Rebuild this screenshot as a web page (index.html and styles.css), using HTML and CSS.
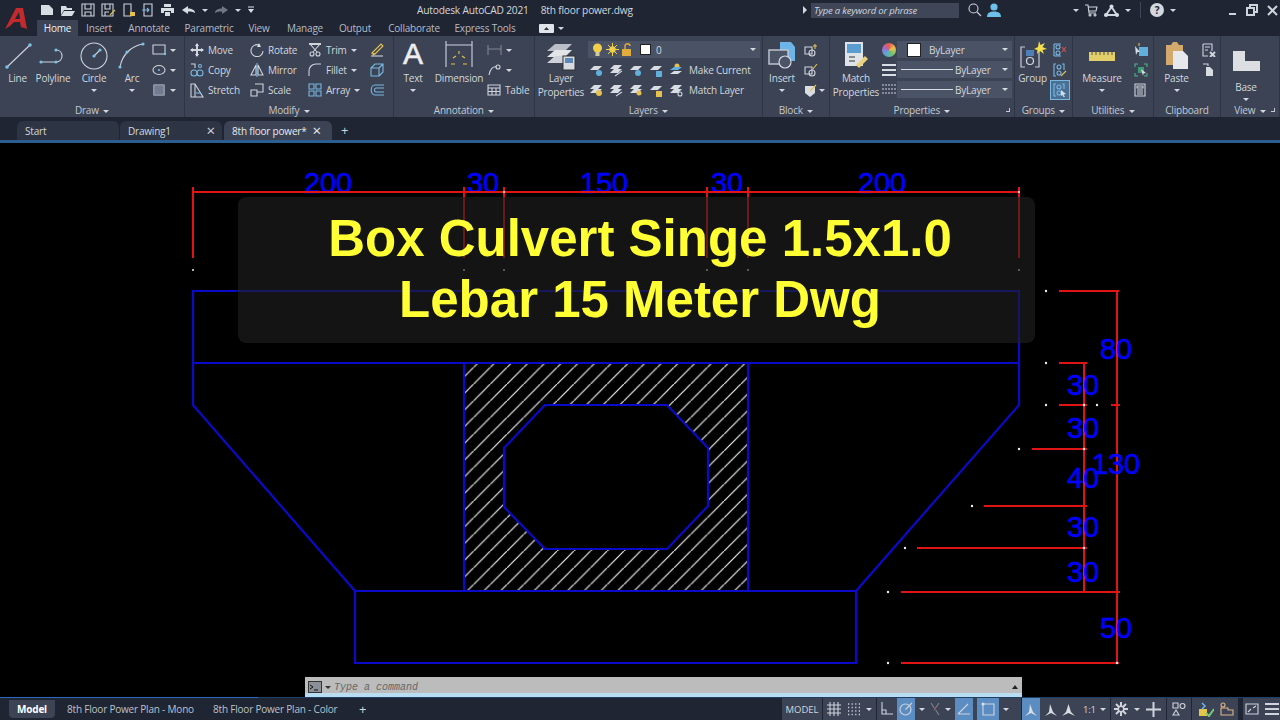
FILE: index.html
```html
<!DOCTYPE html>
<html lang="en">
<head>
    <meta charset="UTF-8">
    <title>Autodesk AutoCAD 2021 - 8th floor power.dwg</title>
    <link rel="stylesheet" href="styles.css">
</head>
<body>
<div class="app">
    <!-- Title bar and ribbon tabs -->
    <header class="topbar">
        <div class="logo">
            <svg width="24" height="28" viewBox="0 0 24 28"><path class="logo-a" d="M1 24 L12 3 H19 L23 24 L17 22 L16 17 H10 L6 21 Z M11 14 H16 L15 7 Z"/></svg>
        </div>
        <div class="topbar-rows">
            <div class="titlerow">
                <div class="quick">
                    <svg class="ic" width="14" height="14" viewBox="0 0 14 14"><path class="solid" d="M1 2 H9 L13 6 V12 H1 Z"/></svg>
                    <svg class="ic" width="15" height="14" viewBox="0 0 15 14"><path class="solid" d="M1 3 H6 L7 5 H12 V7 H4 L1 12 Z M4 8 H15 L12 13 H1 Z"/></svg>
                    <svg class="ic" width="14" height="14" viewBox="0 0 14 14"><path d="M1 1 H13 V13 H1 Z M4 1 V6 H10 V1 M4 13 V9 H10 V13"/></svg>
                    <svg class="ic" width="15" height="14" viewBox="0 0 15 14"><path d="M1 1 H12 V13 H1 Z M4 1 V6 H9 V1 M4 13 V9 H8"/><path class="yel" d="M9 12 L14 7"/></svg>
                    <svg class="ic" width="14" height="14" viewBox="0 0 14 14"><path d="M2 1 H9 V13 H2 Z"/><path class="solid-y" d="M8 9 H13 V13 H8 Z"/></svg>
                    <svg class="ic" width="12" height="14" viewBox="0 0 12 14"><path d="M2 1 H10 V13 H2 Z"/><path class="bl" d="M0 7 H7 M5 5 L7 7 L5 9"/></svg>
                    <svg class="ic" width="15" height="14" viewBox="0 0 15 14"><path class="solid" d="M4 1 H11 V4 H4 Z M1 5 H14 V10 H11 V8 H4 V10 H1 Z M5 9 H10 V13 H5 Z"/></svg>
                    <svg class="ic" width="15" height="14" viewBox="0 0 15 14"><path class="solid" d="M1 7 L7 3 V5.5 C11 5.5 14 7 14 10 C12 8.5 10 8.5 7 8.5 V11 Z"/></svg>
                    <span class="caret"></span>
                    <svg class="ic dim" width="15" height="14" viewBox="0 0 15 14"><path class="solid" d="M14 7 L8 3 V5.5 C4 5.5 1 7 1 10 C3 8.5 5 8.5 8 8.5 V11 Z"/></svg>
                    <span class="caret"></span>
                    <svg class="ic" width="8" height="8" viewBox="0 0 8 8"><path d="M1 1 H7"/><path class="solid" d="M1 3 H7 L4 7 Z"/></svg>
                </div>
                <div class="doc-title"><span>Autodesk AutoCAD 2021</span><span>8th floor power.dwg</span></div>
                <div class="searchgroup">
                    <span class="arrow-right"></span>
                    <div class="searchbox">Type a keyword or phrase</div>
                    <svg class="ic" width="14" height="14" viewBox="0 0 14 14"><circle cx="5.5" cy="5.5" r="4.5"/><path d="M9 9 L13 13"/></svg>
                    <svg width="16" height="15" viewBox="0 0 16 15"><circle cx="8" cy="4" r="3.6" fill="#6cc0ea"/><path d="M1 14 C1 9 5 8.5 8 8.5 C11 8.5 15 9 15 14 Z" fill="#6cc0ea"/></svg>
                </div>
                <div class="helpgroup">
                    <span class="caret"></span>
                    <svg class="ic" width="13" height="13" viewBox="0 0 13 13"><path d="M0 1 H3 L4 9 H11 M3.5 3 H12 L11 7 H4"/><circle cx="5" cy="11" r="1"/><circle cx="10" cy="11" r="1"/></svg>
                    <svg class="ic" width="15" height="13" viewBox="0 0 15 13"><path class="thick" d="M7.5 3 L2 11 H13 Z"/><circle class="solid" cx="7.5" cy="2.5" r="2"/><circle class="solid" cx="2" cy="11" r="2"/><circle class="solid" cx="13" cy="11" r="2"/></svg>
                    <span class="caret"></span>
                    <span class="vsep"></span>
                    <span class="help">?</span>
                    <span class="caret"></span>
                </div>
                <div class="winbtns">
                    <svg class="ic" width="9" height="10" viewBox="0 0 9 10"><path class="thick" d="M1 9 H8"/></svg>
                    <svg class="ic" width="12" height="12" viewBox="0 0 12 12"><path class="thick" d="M1 4 H8 V11 H1 Z M4 4 V1 H11 V8 H8"/></svg>
                    <svg class="ic" width="11" height="11" viewBox="0 0 11 11"><path class="thick" d="M1 1 L10 10 M10 1 L1 10"/></svg>
                </div>
            </div>
            <nav class="ribbon-tabs">
                <span class="rtab active">Home</span>
                <span class="rtab">Insert</span>
                <span class="rtab">Annotate</span>
                <span class="rtab">Parametric</span>
                <span class="rtab">View</span>
                <span class="rtab">Manage</span>
                <span class="rtab">Output</span>
                <span class="rtab">Collaborate</span>
                <span class="rtab">Express Tools</span>
                <span class="rtab-extra"><svg width="15" height="9" viewBox="0 0 15 9"><rect width="15" height="9" rx="1" fill="#dfe3ea"/><path d="M5 6 L7.5 3 L10 6 Z" fill="#333"/></svg><span class="caret"></span></span>
            </nav>
        </div>
    </header>

    <!-- Ribbon panels -->
    <section class="ribbon">
        <div class="panel p-draw">
            <div class="panel-body">
                <div class="tool"><div class="tool-ic"><svg class="ic" width="30" height="30" viewBox="0 0 30 30"><path d="M4 26 L27 4"/><circle class="node" cx="4" cy="26" r="1.8"/><circle class="node" cx="27" cy="4" r="1.8"/></svg></div><span>Line</span></div>
                <div class="tool"><div class="tool-ic"><svg class="ic" width="30" height="30" viewBox="0 0 30 30"><path d="M3 21 H18 C26 21 26 9 18 9"/><circle class="node" cx="3" cy="21" r="1.6"/><circle class="node" cx="18" cy="21" r="1.6"/><circle class="node" cx="18" cy="9" r="1.6"/></svg></div><span>Polyline</span></div>
                <div class="tool"><div class="tool-ic"><svg class="ic" width="30" height="30" viewBox="0 0 30 30"><circle cx="15" cy="15" r="13"/><path d="M15 15 L21 9"/><circle class="node" cx="15" cy="15" r="1.6"/><circle class="node" cx="21" cy="9" r="1.6"/></svg></div><span>Circle</span><span class="caret"></span></div>
                <div class="tool"><div class="tool-ic"><svg class="ic" width="30" height="30" viewBox="0 0 30 30"><path d="M3 26 C5 14 14 5 26 3"/><circle class="node" cx="3" cy="26" r="1.6"/><circle class="node" cx="10" cy="11" r="1.6"/><circle class="node" cx="26" cy="3" r="1.6"/></svg></div><span>Arc</span><span class="caret"></span></div>
                <div class="stack">
                    <div class="row"><svg class="ic" width="14" height="12" viewBox="0 0 14 12"><path d="M1 1 H13 V10 H1 Z"/><circle class="node" cx="13" cy="10" r="1.2"/></svg><span class="caret"></span></div>
                    <div class="row"><svg class="ic" width="14" height="12" viewBox="0 0 14 12"><ellipse cx="7" cy="6" rx="6" ry="4.5"/><circle class="node" cx="7" cy="6" r="1"/></svg><span class="caret"></span></div>
                    <div class="row"><svg class="ic" width="14" height="14" viewBox="0 0 14 14"><path d="M2 2 H12 V12 H2 Z"/><path class="hatch-fill" d="M2 2 H12 V12 H2 Z"/></svg><span class="caret"></span></div>
                </div>
            </div>
            <div class="panel-title">Draw <span class="caret"></span></div>
        </div>

        <div class="panel p-modify">
            <div class="panel-body">
                <div class="stack">
                    <div class="row"><svg class="ic" width="14" height="14" viewBox="0 0 14 14"><path class="thick" d="M7 1 V13 M1 7 H13"/><path class="solid" d="M7 0 L9 3 H5 Z M7 14 L9 11 H5 Z M0 7 L3 5 V9 Z M14 7 L11 5 V9 Z"/></svg><span>Move</span></div>
                    <div class="row"><svg class="ic" width="14" height="14" viewBox="0 0 14 14"><circle class="bl" cx="4" cy="10" r="3"/><circle class="bl" cx="10" cy="10" r="3"/><path d="M1 1 H5 V5"/><circle class="bl" cx="10" cy="3" r="1.5"/></svg><span>Copy</span></div>
                    <div class="row"><svg class="ic" width="14" height="15" viewBox="0 0 14 15"><path d="M1 1 H5 V14 H1 Z M5 1 L13 14 H5"/><path class="bl" d="M6 10 H11"/></svg><span>Stretch</span></div>
                </div>
                <div class="stack">
                    <div class="row"><svg class="ic" width="14" height="14" viewBox="0 0 14 14"><path d="M9 2 A6 6 0 1 0 13 8"/><path class="solid" d="M9 0 L11 4 L7 4 Z"/></svg><span>Rotate</span></div>
                    <div class="row"><svg class="ic" width="14" height="14" viewBox="0 0 14 14"><path d="M6 2 L1 12 H6 Z M8 2 L13 12 H8 Z"/><path class="bl" d="M7 0 V14"/></svg><span>Mirror</span></div>
                    <div class="row"><svg class="ic" width="14" height="14" viewBox="0 0 14 14"><path d="M1 13 V7 H7 V13 Z M5 1 H13 V9 H7"/></svg><span>Scale</span></div>
                </div>
                <div class="stack">
                    <div class="row"><svg class="ic" width="14" height="14" viewBox="0 0 14 14"><path d="M2 1 L9 9 M12 1 L5 9"/><circle cx="4" cy="11" r="2"/><circle cx="10" cy="11" r="2"/><path class="thick" d="M1 1 H13"/></svg><span>Trim</span><span class="caret"></span></div>
                    <div class="row"><svg class="ic" width="14" height="14" viewBox="0 0 14 14"><path d="M1 13 V8 C1 4 4 1 8 1 H13"/></svg><span>Fillet</span><span class="caret"></span></div>
                    <div class="row"><svg class="ic" width="14" height="14" viewBox="0 0 14 14"><path class="bl" d="M1 1 H6 V6 H1 Z M8 1 H13 V6 H8 Z M1 8 H6 V13 H1 Z M8 8 H13 V13 H8 Z"/></svg><span>Array</span><span class="caret"></span></div>
                </div>
                <div class="stack">
                    <div class="row"><svg class="ic" width="14" height="14" viewBox="0 0 14 14"><path class="yel" d="M2 10 L11 1 L13 3 L5 11 Z"/><path class="solid-y" d="M2 10 L5 11 L3 13 Z"/><path d="M1 13 H13"/></svg></div>
                    <div class="row"><svg class="ic" width="14" height="14" viewBox="0 0 14 14"><path class="bl" d="M1 5 H9 V13 H1 Z M1 5 L5 1 H13 V9 L9 13 M9 5 L13 1"/></svg></div>
                    <div class="row"><svg class="ic" width="14" height="12" viewBox="0 0 14 12"><path class="bl" d="M14 1 H5 C0 1 0 11 5 11 H14 M14 4 H6 C4 4 4 8 6 8 H14"/></svg></div>
                </div>
            </div>
            <div class="panel-title">Modify <span class="caret"></span></div>
        </div>

        <div class="panel p-annot">
            <div class="panel-body">
                <div class="tool"><div class="tool-ic"><span class="big-a">A</span></div><span>Text</span><span class="caret"></span></div>
                <div class="tool"><div class="tool-ic"><svg class="ic" width="28" height="28" viewBox="0 0 28 28"><path d="M1 1 V27 M27 1 V27 M1 5 H27"/><path class="yel" d="M8 18 L11 16 M14 11 V14 M20 18 L17 16 M6 24 H10 M18 24 H22"/></svg></div><span>Dimension</span></div>
                <div class="stack">
                    <div class="row"><svg class="ic dim" width="15" height="12" viewBox="0 0 15 12"><path d="M1 1 V11 M14 1 V11 M1 5 H14"/></svg><span class="caret"></span></div>
                    <div class="row"><svg class="ic" width="15" height="12" viewBox="0 0 15 12"><path d="M2 11 C3 5 6 2 10 3"/><circle cx="11" cy="3" r="2"/></svg><span class="caret"></span></div>
                    <div class="row"><svg class="ic" width="14" height="12" viewBox="0 0 14 12"><path d="M1 1 H13 V11 H1 Z M1 4 H13 M1 7.5 H13 M5 4 V11 M9 4 V11"/></svg><span>Table</span></div>
                </div>
            </div>
            <div class="panel-title">Annotation <span class="caret"></span></div>
        </div>

        <div class="panel p-layers">
            <div class="panel-body">
                <div class="tool"><div class="tool-ic"><svg width="30" height="30" viewBox="0 0 30 30"><path d="M1 10 L9 3 H26 L19 10 Z" fill="#b9bec8"/><path d="M1 16 L9 9 H26 L19 16 Z" fill="#e2e4e8"/><path d="M1 22 L9 15 H26 L19 22 Z" fill="#cfd2d8"/><rect x="17" y="15" width="12" height="14" fill="#d8dbe0" stroke="#333"/><rect x="19" y="17" width="8" height="5" fill="#5a88b8"/></svg></div><span>Layer</span><span>Properties</span></div>
                <div class="layer-col">
                    <div class="combo layer-combo">
                        <svg width="13" height="14" viewBox="0 0 13 14"><circle cx="6.5" cy="5" r="4.5" fill="#f2cf4a"/><rect x="4.5" y="9" width="4" height="4" fill="#d0c9a5"/></svg>
                        <svg width="13" height="13" viewBox="0 0 13 13"><circle cx="6.5" cy="6.5" r="3.2" fill="#f2cf4a"/><path d="M6.5 0 V13 M0 6.5 H13 M2 2 L11 11 M11 2 L2 11" stroke="#f2cf4a"/></svg>
                        <svg width="13" height="13" viewBox="0 0 13 13"><rect x="1" y="6" width="9" height="7" fill="#e2ab3e"/><path d="M4 6 V3 C4 0 9 0 9 3" stroke="#e2ab3e" stroke-width="1.4" fill="none"/></svg>
                        <span class="swatch"></span>
                        <span class="combo-text">0</span>
                        <span class="caret end"></span>
                    </div>
                    <div class="row layer-row">
                        <svg class="ic" width="14" height="13" viewBox="0 0 14 13"><path class="solid" d="M1 6 L5 2 H13 L9 6 Z"/><circle class="solid-b" cx="10" cy="9" r="3"/></svg>
                        <svg class="ic" width="14" height="13" viewBox="0 0 14 13"><path class="solid" d="M1 5 L5 1 H13 L9 5 Z M1 9 L5 5 H13 L9 9 Z"/><path d="M6 12 L13 7"/></svg>
                        <svg class="ic" width="14" height="13" viewBox="0 0 14 13"><path class="solid" d="M1 6 L5 2 H13 L9 6 Z"/><circle class="solid-b" cx="9" cy="9" r="3"/></svg>
                        <svg class="ic" width="14" height="13" viewBox="0 0 14 13"><path class="solid" d="M1 6 L5 2 H13 L9 6 Z"/><rect class="solid-b" x="7" y="7" width="6" height="6"/></svg>
                        <svg class="ic" width="14" height="14" viewBox="0 0 14 14"><circle class="solid-y" cx="8" cy="3" r="2.5"/><path class="solid-b" d="M1 7 L5 4 H13 L9 7 Z"/><path class="solid" d="M1 11 L5 8 H13 L9 11 Z"/></svg>
                        <span>Make Current</span>
                    </div>
                    <div class="row layer-row">
                        <svg class="ic" width="14" height="13" viewBox="0 0 14 13"><path class="solid" d="M1 5 L5 1 H13 L9 5 Z M1 9 L5 5 H13 L9 9 Z"/><circle class="solid-y" cx="10" cy="9" r="3"/></svg>
                        <svg class="ic" width="14" height="13" viewBox="0 0 14 13"><path class="solid" d="M1 5 L5 1 H13 L9 5 Z M1 9 L5 5 H13 L9 9 Z"/><path d="M7 12 L13 8"/></svg>
                        <svg class="ic" width="14" height="13" viewBox="0 0 14 13"><path class="solid" d="M1 5 L5 1 H13 L9 5 Z M1 9 L5 5 H13 L9 9 Z"/><circle class="solid-y" cx="10" cy="9" r="2.5"/></svg>
                        <svg class="ic" width="14" height="13" viewBox="0 0 14 13"><path class="solid" d="M1 6 L5 2 H13 L9 6 Z"/><rect class="solid-y" x="7" y="7" width="6" height="6"/></svg>
                        <svg class="ic" width="14" height="13" viewBox="0 0 14 13"><path class="solid" d="M1 5 L5 1 H13 L9 5 Z M1 9 L5 5 H13 L9 9 Z"/><circle cx="11" cy="10" r="2"/></svg>
                        <span>Match Layer</span>
                    </div>
                </div>
            </div>
            <div class="panel-title">Layers <span class="caret"></span></div>
        </div>

        <div class="panel p-block">
            <div class="panel-body">
                <div class="tool"><div class="tool-ic"><svg width="28" height="30" viewBox="0 0 28 30"><path d="M12 1 H23 L27 6 V20 H12 Z" fill="#6db4e8"/><rect x="1" y="9" width="19" height="14" fill="#4c5568" stroke="#c5cad3" stroke-width="1.4"/><circle cx="17" cy="21" r="6" fill="#4c5568" stroke="#d5d9e0" stroke-width="1.2"/></svg></div><span>Insert</span><span class="caret"></span></div>
                <div class="stack">
                    <div class="row"><svg class="ic" width="14" height="13" viewBox="0 0 14 13"><path d="M1 3 H8 V10 H1 Z"/><circle cx="8" cy="9" r="3"/><path class="yel" d="M11 0 V5 M9 2 H13"/></svg></div>
                    <div class="row"><svg class="ic" width="14" height="13" viewBox="0 0 14 13"><path d="M1 3 H8 V10 H1 Z"/><circle cx="8" cy="9" r="3"/><path class="yel" d="M9 5 L13 0"/></svg></div>
                    <div class="row"><svg class="ic" width="14" height="13" viewBox="0 0 14 13"><path class="solid" d="M1 2 H11 V9 L6 13 L1 9 Z"/><path class="yel" d="M6 7 L12 1"/></svg><span class="caret tight"></span></div>
                </div>
            </div>
            <div class="panel-title">Block <span class="caret"></span></div>
        </div>

        <div class="panel p-props">
            <div class="panel-body">
                <div class="tool"><div class="tool-ic"><svg width="26" height="30" viewBox="0 0 26 30"><rect x="2" y="1" width="18" height="24" fill="#dfe2e7"/><rect x="4" y="3" width="14" height="9" fill="#5a9bd0"/><path d="M6 16 H12 M6 20 H12" stroke="#333"/><path d="M13 24 L22 15 L25 18 L16 27 Z" fill="#e9d27a"/></svg></div><span>Match</span><span>Properties</span></div>
                <div class="stack prop-ics">
                    <div class="row"><span class="wheel"></span></div>
                    <div class="row"><svg class="ic" width="14" height="12" viewBox="0 0 14 12"><path class="solid" d="M0 0 H14 V2 H0 Z M0 5 H14 V7 H0 Z M0 10 H14 V12 H0 Z"/></svg></div>
                    <div class="row"><svg class="ic" width="14" height="12" viewBox="0 0 14 12"><path class="dash" d="M0 1 H14 M0 5 H14 M0 9 H14"/></svg></div>
                </div>
                <div class="prop-combos">
                    <div class="combo"><span class="swatch big"></span><span class="combo-text bylayer">ByLayer</span><span class="caret end"></span></div>
                    <div class="combo"><span class="lineprev"></span><span class="combo-text">ByLayer</span><span class="caret end"></span></div>
                    <div class="combo"><span class="lineprev"></span><span class="combo-text">ByLayer</span><span class="caret end"></span></div>
                </div>
            </div>
            <div class="panel-title">Properties <span class="caret"></span><span class="launcher"></span></div>
        </div>

        <div class="panel p-groups">
            <div class="panel-body">
                <div class="tool"><div class="tool-ic"><svg width="28" height="30" viewBox="0 0 28 30"><path d="M6 6 H2 V26 H6 M20 6 V26 H16" fill="none" stroke="#c8ccd4" stroke-width="1.2"/><rect x="7" y="9" width="8" height="6" fill="#4e80b8"/><circle cx="11" cy="20" r="3.5" fill="none" stroke="#d5d9e0" stroke-width="1.2"/><path d="M20 0 L21.5 4 L26 2 L23.5 6 L28 8 L23.5 9 L25 13 L21 10 L18 13 L18.5 9 L15 8 L19 6 Z" fill="#f4e04a"/></svg></div><span>Group</span></div>
                <div class="stack">
                    <div class="row"><svg class="ic" width="14" height="14" viewBox="0 0 14 14"><path class="bl" d="M1 1 H8 M1 13 H8 M1 1 V13"/><circle class="bl" cx="5" cy="4" r="2"/><circle class="bl" cx="5" cy="10" r="2"/><path class="red" d="M9 4 L13 9 M13 4 L9 9"/></svg></div>
                    <div class="row"><svg class="ic" width="14" height="14" viewBox="0 0 14 14"><path class="bl" d="M3 1 H1 V13 H3 M9 1 H11 V7"/><circle class="bl" cx="6" cy="4" r="2"/><circle class="bl" cx="6" cy="10" r="2"/><path class="yel" d="M8 13 L13 8"/></svg></div>
                    <div class="row picked"><svg class="ic" width="14" height="14" viewBox="0 0 14 14"><path class="bl" d="M3 1 H1 V13 H3 M9 1 H11 V6"/><circle class="bl" cx="6" cy="4" r="2"/><circle class="bl" cx="6" cy="10" r="2"/><path class="solid" d="M8 7 L13 11 L10.5 11.5 L12 14 L10.5 14 L9.5 12 L8 13 Z"/></svg></div>
                </div>
            </div>
            <div class="panel-title">Groups <span class="caret"></span></div>
        </div>

        <div class="panel p-utils">
            <div class="panel-body">
                <div class="tool"><div class="tool-ic"><svg width="26" height="10" viewBox="0 0 26 10"><rect width="26" height="9" y="1" fill="#e2cf6a"/><path d="M3 1 V4 M7 1 V4 M11 1 V4 M15 1 V4 M19 1 V4 M23 1 V4" stroke="#555"/></svg></div><span>Measure</span><span class="caret"></span></div>
                <div class="stack">
                    <div class="row"><svg class="ic" width="14" height="14" viewBox="0 0 14 14"><rect class="solid-b" x="5" y="4" width="9" height="9"/><path class="solid" d="M1 3 L6 9 L3.5 9 L2 12 Z"/><path class="yel" d="M5 0 L5 3"/></svg></div>
                    <div class="row"><svg class="ic" width="14" height="14" viewBox="0 0 14 14"><path class="grn" d="M1 4 V1 H4 M10 1 H13 V4 M13 10 V13 H10 M4 13 H1 V10"/><rect class="solid-g" x="4" y="4" width="6" height="6"/><path class="solid" d="M7 6 L12 10 L9.5 10.5 L9 13 Z"/></svg></div>
                    <div class="row"><svg class="ic" width="12" height="14" viewBox="0 0 12 14"><path d="M1 1 H11 V13 H1 Z M3 3 H9 V5 H3 Z M3 7 H9 M3 9 H9 M3 11 H9"/></svg></div>
                </div>
            </div>
            <div class="panel-title">Utilities <span class="caret"></span></div>
        </div>

        <div class="panel p-clip">
            <div class="panel-body">
                <div class="tool"><div class="tool-ic"><svg width="24" height="30" viewBox="0 0 24 30"><path d="M1 4 H6 L8 1 H12 L14 4 H18 V24 H1 Z" fill="#d4a96c"/><path d="M8 10 H18 L23 15 V28 H8 Z" fill="#e6e8ec"/></svg></div><span>Paste</span><span class="caret"></span></div>
                <div class="stack">
                    <div class="row"><svg class="ic" width="14" height="14" viewBox="0 0 14 14"><path d="M1 1 H10 V8 M1 1 V13 H6 M3 4 H8 M3 7 H6"/><path class="thick" d="M8 9 L13 14 M13 9 L8 14"/></svg></div>
                    <div class="row"><svg class="ic" width="12" height="14" viewBox="0 0 12 14"><path d="M1 1 H6 V3"/><path class="solid" d="M4 4 H8 L11 7 V13 H4 Z"/></svg></div>
                </div>
            </div>
            <div class="panel-title">Clipboard</div>
        </div>

        <div class="panel p-view">
            <div class="panel-body">
                <div class="tool"><div class="tool-ic"><svg width="29" height="22" viewBox="0 0 29 22"><path d="M1 1 H13 V11 H28 V21 H1 Z" fill="#dcdee2"/></svg></div><span>Base</span><span class="caret"></span></div>
            </div>
            <div class="panel-title">View <span class="caret"></span><span class="launcher"></span></div>
        </div>
    </section>

    <!-- File tabs -->
    <div class="doctabs">
        <div class="doctab">Start</div>
        <div class="doctab">Drawing1<span class="tab-x">&times;</span></div>
        <div class="doctab current">8th floor power*<span class="tab-x">&times;</span></div>
        <span class="tab-plus">+</span>
    </div>

    <!-- Drawing area -->
    <main class="canvas">
        <svg class="drawing" width="1280" height="554" viewBox="0 143 1280 554">
            <defs>
                <pattern id="hatch" patternUnits="userSpaceOnUse" width="16.7" height="16.7" patternTransform="translate(6 0)">
                    <path d="M-2 18.7 L18.7 -2" stroke="#efefef" stroke-width="1.2"/>
                </pattern>
            </defs>

            <path d="M464 363 H748 V591 H464 Z M545 405 L504 448 V507 L545 549 H667 L708 506 V448 L667 405 Z" fill="url(#hatch)" fill-rule="evenodd"/>

            <g class="dim-text">
                <text x="328" y="193">200</text>
                <text x="483" y="193">30</text>
                <text x="604" y="193">150</text>
                <text x="727" y="193">30</text>
                <text x="882" y="193">200</text>
            </g>

            <g class="dim-line">
                <path d="M193 192 H1019 M193 187 V258 M464 187 V258 M504 187 V258 M707 187 V258 M748 187 V258 M1019 187 V258"/>
                <path d="M1059 291 H1119 M1117 291 V663 M1059 363 H1087 M1084 363 V592 M1059 405 H1087 M1111 405 H1120 M1032 449 H1087 M984 506 H1087 M917 548 H1087 M901 592 H1120 M901 663 H1119"/>
            </g>

            <g class="obj-line">
                <path d="M193 291 H1019 V405 L856 591 V663 H355 V591 L193 405 Z M193 363 H1019 M355 591 H856 M464 363 V591 M748 363 V591"/>
                <path d="M545 405 L504 448 V507 L545 549 H667 L708 506 V448 L667 405 Z"/>
            </g>

            <g class="dim-text">
                <text x="1116" y="359">80</text>
                <text x="1083" y="395">30</text>
                <text x="1083" y="438">30</text>
                <text x="1083" y="488">40</text>
                <text x="1116" y="474">130</text>
                <text x="1083" y="537">30</text>
                <text x="1083" y="582">30</text>
                <text x="1116" y="638">50</text>
            </g>

            <g class="grip">
                <circle cx="193" cy="270" r="1"/><circle cx="464" cy="270" r="1"/><circle cx="504" cy="270" r="1"/>
                <circle cx="707" cy="270" r="1"/><circle cx="748" cy="270" r="1"/><circle cx="1019" cy="270" r="1"/>
                <circle cx="504" cy="192" r="1"/><circle cx="1019" cy="192" r="1"/>
                <circle cx="1046" cy="291" r="1.2"/><circle cx="1046" cy="363" r="1.2"/><circle cx="1046" cy="405" r="1.2"/>
                <circle cx="1097" cy="405" r="1.2"/><circle cx="1019" cy="449" r="1.2"/><circle cx="972" cy="506" r="1.2"/>
                <circle cx="905" cy="548" r="1.2"/><circle cx="888" cy="592" r="1.2"/><circle cx="888" cy="663" r="1.2"/>
                <circle cx="1084" cy="405" r="1.2"/><circle cx="1084" cy="449" r="1.2"/><circle cx="1084" cy="548" r="1.2"/><circle cx="1117" cy="663" r="1.2"/>
            </g>
        </svg>

        <div class="caption">
            <p>Box Culvert Singe 1.5x1.0</p>
            <p>Lebar 15 Meter Dwg</p>
        </div>

        <div class="cmdline">
            <svg width="14" height="12" viewBox="0 0 14 12"><rect x=".5" y=".5" width="13" height="11" fill="#8a8f98" stroke="#333"/><path d="M2 4 L5 6 L2 8 M6 9 H10" stroke="#111" fill="none"/></svg>
            <span class="caret dark"></span>
            <span class="cmd-text">Type a command</span>
            <span class="caret up"></span>
        </div>
    </main>

    <!-- Status bar -->
    <footer class="statusbar">
        <div class="layouts">
            <span class="ltab current">Model</span>
            <span class="ltab">8th Floor Power Plan - Mono</span>
            <span class="ltab">8th Floor Power Plan - Color</span>
            <span class="ltab-plus">+</span>
        </div>
        <div class="status-tools">
            <div class="sgroup s-model">MODEL</div>
            <div class="sgroup s-grid">
                <svg class="ic" width="14" height="14" viewBox="0 0 14 14"><path d="M3 0 V14 M7 0 V14 M11 0 V14 M0 3 H14 M0 7 H14 M0 11 H14"/></svg>
                <svg class="ic" width="13" height="13" viewBox="0 0 13 13"><path class="dots" d="M1 1 H13 M1 4.5 H13 M1 8 H13 M1 11.5 H13"/></svg>
                <span class="caret"></span>
            </div>
            <div class="sgroup s-snap">
                <svg class="ic" width="13" height="14" viewBox="0 0 13 14"><path d="M2 0 V12 H13 M2 8 H6 V12"/></svg>
                <span class="sbtn on"><svg class="ic" width="14" height="14" viewBox="0 0 14 14"><circle cx="6.5" cy="7.5" r="5.5"/><path d="M6.5 7.5 L13 1"/></svg></span>
                <span class="caret"></span>
                <svg class="ic dim" width="12" height="14" viewBox="0 0 12 14"><path d="M2 1 L10 13 M10 1 L5 8"/><path class="red" d="M5 5 L7 9"/></svg>
                <span class="caret"></span>
                <span class="sbtn on"><svg class="ic" width="14" height="12" viewBox="0 0 14 12"><path d="M1 11 H13 M1 11 L11 1"/></svg></span>
                <span class="sbtn on wide"><svg class="ic" width="14" height="14" viewBox="0 0 14 14"><path d="M2 2 H13 V13 H2 Z"/><circle class="solid" cx="2" cy="2" r="1.6"/></svg></span>
                <span class="caret"></span>
            </div>
            <div class="sgroup s-anno">
                <span class="sbtn on"><svg class="ic" width="14" height="15" viewBox="0 0 14 15"><path class="solid" d="M6 2 L9 10 L13 14 L7 11 L1 14 L5 10 Z"/></svg></span>
                <svg class="ic" width="14" height="15" viewBox="0 0 14 15"><path class="solid" d="M6 2 L9 10 L13 14 L7 11 L1 14 L5 10 Z"/></svg>
                <svg class="ic" width="13" height="15" viewBox="0 0 13 15"><path class="solid" d="M6.5 2 L9 10 L13 14 L6.5 11 L0 14 L4 10 Z"/></svg>
                <span class="scale">1:1</span>
                <span class="caret"></span>
            </div>
            <div class="sgroup s-gear">
                <svg class="ic" width="14" height="14" viewBox="0 0 14 14"><circle class="gear" cx="7" cy="7" r="3.5"/><path class="thick" d="M7 0 V14 M0 7 H14 M2 2 L12 12 M12 2 L2 12"/><circle class="hole" cx="7" cy="7" r="2"/></svg>
                <span class="caret"></span>
                <svg class="ic" width="15" height="15" viewBox="0 0 15 15"><path class="thick" d="M7.5 0 V15 M0 7.5 H15"/></svg>
            </div>
            <div class="sgroup s-iso">
                <svg class="ic" width="14" height="14" viewBox="0 0 14 14"><path d="M1 1 H6 V6 H1 Z"/><circle cx="10.5" cy="4" r="2.5"/><path d="M4 8 L7 13 H1 Z"/></svg>
            </div>
            <div class="sgroup s-clean">
                <svg width="18" height="16" viewBox="0 0 18 16"><path d="M3 8 H11 V15 H3 Z" fill="#e8c34a"/><path d="M6 2 L9 5 L6 8" stroke="#6cb4e6" fill="none" stroke-width="1.5"/><path d="M10 12 L13 15 L18 8" stroke="#7bc77b" fill="none" stroke-width="2"/></svg>
                <svg class="ic" width="14" height="14" viewBox="0 0 14 14"><circle class="peach" cx="3" cy="3" r="2"/><path class="peach" d="M1 6 V13 H13 V8 H8 V6 Z"/></svg>
            </div>
            <div class="sgroup s-end">
                <svg class="ic" width="14" height="12" viewBox="0 0 14 12"><path d="M1 1 H13 V11 H1 Z"/><path d="M3 9 L6 6 M8 5 L11 3"/></svg>
                <svg class="ic" width="14" height="12" viewBox="0 0 14 12"><path class="thick" d="M0 1 H14 M0 6 H14 M0 11 H14"/></svg>
            </div>
        </div>
    </footer>
</div>
</body>
</html>
```

FILE: styles.css
```css
/* General */
* {
    box-sizing: border-box;
}

body {
    margin: 0;
    background: #000;
    font-family: "Open Sans", "Noto Sans", sans-serif;
    font-size: 10px;
    letter-spacing: -.2px;
    color: #d3d7de;
    overflow: hidden;
}

p {
    margin: 0;
}

svg {
    display: block;
    flex: none;
}

.app {
    display: flex;
    flex-direction: column;
    width: 1280px;
    height: 720px;
}

/* Icon strokes */
.ic {
    fill: none;
    stroke: #cfd4dc;
    stroke-width: 1.1;
}

.ic.dim {
    opacity: .45;
}

.ic .solid { fill: #d8dce3; stroke: none; }
.ic .solid-y { fill: #e6c14e; stroke: none; }
.ic .solid-b { fill: #5fb0dc; stroke: none; }
.ic .solid-g { fill: #3d9a72; stroke: none; }
.ic .thick { stroke-width: 2; }
.ic .node { fill: #7cc0ea; stroke: none; }
.ic .bl { stroke: #7ab8e2; }
.ic .yel { stroke: #e6c14e; }
.ic .red { stroke: #d9534f; }
.ic .grn { stroke: #4fb58a; }
.ic .peach { stroke: #e0b48a; }
.ic .dash { stroke-dasharray: 2 1; }
.ic .dots { stroke-dasharray: 1.2 2.4; stroke-width: 1.4; }
.ic .hatch-fill { fill: #7f8ba0; stroke: none; opacity: .8; }
.ic .gear { fill: #d8dce3; stroke: none; }
.ic .hole { fill: #3a4254; stroke: none; }

.caret {
    display: inline-block;
    flex: none;
    width: 0;
    height: 0;
    border-left: 3px solid transparent;
    border-right: 3px solid transparent;
    border-top: 3px solid #d3d7de;
}

.caret.tight {
    margin-left: -3px;
}

.caret.end {
    margin-left: auto;
}

.caret.dark {
    border-top-color: #333;
}

.caret.up {
    margin-left: auto;
    border-top: 0;
    border-bottom: 4px solid #222;
}

/* Title bar */
.topbar {
    display: flex;
    height: 36px;
    background: #1f2532;
}

.logo {
    flex: none;
    width: 37px;
    padding: 5px 0 0 4px;
}

.logo-a {
    fill: #c22a2d;
    fill-rule: evenodd;
}

.topbar-rows {
    flex: 1;
    min-width: 0;
}

.titlerow {
    display: flex;
    align-items: center;
    height: 20px;
}

.quick {
    flex: none;
    display: flex;
    align-items: center;
    gap: 6px;
    width: 380px;
    padding-left: 3px;
}

.doc-title {
    flex: none;
    display: flex;
    gap: 12px;
    width: 386px;
    font-size: 10.2px;
}

.searchgroup {
    flex: none;
    display: flex;
    align-items: center;
    gap: 4px;
    width: 270px;
}

.arrow-right {
    width: 0;
    height: 0;
    border-top: 4px solid transparent;
    border-bottom: 4px solid transparent;
    border-left: 4px solid #d3d7de;
}

.searchbox {
    width: 148px;
    height: 15px;
    margin-right: 5px;
    padding-left: 3px;
    background: #3e4658;
    font-style: italic;
    font-size: 9.5px;
    line-height: 15px;
}

.helpgroup {
    flex: none;
    display: flex;
    align-items: center;
    gap: 6px;
    width: 150px;
}

.vsep {
    width: 1px;
    height: 16px;
    margin: 0 3px;
    background: #3e4658;
}

.help {
    width: 14px;
    height: 14px;
    border-radius: 50%;
    background: #d3d7de;
    color: #1f2532;
    font-weight: bold;
    font-size: 10px;
    line-height: 14px;
    text-align: center;
}

.winbtns {
    flex: none;
    display: flex;
    align-items: center;
    gap: 9px;
    padding-left: 5px;
}

/* Ribbon tabs */
.ribbon-tabs {
    display: grid;
    grid-template-columns: 41px 42px 58px 62px 38px 54px 46px 72px 70px auto;
    height: 16px;
    line-height: 16px;
    font-size: 10px;
    text-align: center;
    color: #b6bcc7;
}

.rtab.active {
    background: #3b4354;
    color: #eef0f3;
}

.rtab-extra {
    display: flex;
    align-items: center;
    gap: 4px;
    padding-left: 19px;
}

/* Ribbon panels */
.ribbon {
    display: grid;
    grid-template-columns: 185px 209px 141px 228px 67px 185px 58px 81px 67px 59px;
    height: 81px;
    background: #3b4354;
}

.panel {
    display: flex;
    flex-direction: column;
    border-right: 1px solid #2e3544;
}

.panel-body {
    flex: 1;
    display: grid;
    padding-top: 4px;
    min-height: 0;
}

.panel-title {
    position: relative;
    height: 14px;
    line-height: 14px;
    text-align: center;
    color: #c4c9d2;
}

.panel-title .caret {
    margin-left: 2px;
    vertical-align: 1px;
}

.launcher {
    position: absolute;
    right: 4px;
    top: 5px;
    width: 4px;
    height: 4px;
    border-right: 1px solid #c4c9d2;
    border-bottom: 1px solid #c4c9d2;
}

.tool {
    display: flex;
    flex-direction: column;
    align-items: center;
    line-height: 14px;
    white-space: nowrap;
}

.tool-ic {
    display: flex;
    align-items: center;
    justify-content: center;
    height: 31px;
}

.tool .caret {
    margin-top: 4px;
}

.stack {
    display: grid;
    grid-auto-rows: 20px;
}

.row {
    display: flex;
    align-items: center;
    gap: 4px;
    white-space: nowrap;
}

.p-draw .panel-body { grid-template-columns: 35px 36px 46px 30px 1fr; }
.p-draw .stack { padding-left: 5px; }
.p-modify .panel-body { grid-template-columns: 60px 58px 62px 1fr; padding-left: 5px; }
.p-annot .panel-body { grid-template-columns: 38px 54px 1fr; }
.p-annot .stack { padding-left: 1px; }
.p-layers .panel-body { grid-template-columns: 52px 1fr; }
.p-block .panel-body { grid-template-columns: 38px 1fr; }
.p-block .stack { padding-left: 3px; }
.p-props .panel-body { grid-template-columns: 52px 15px 1fr; }
.p-props .stack { padding-left: 0; }
.p-groups .panel-body { grid-template-columns: 35px 1fr; }
.p-groups .row { padding-left: 3px; }
.p-utils .panel-body { grid-template-columns: 58px 1fr; }
.p-utils .stack { padding-left: 3px; }
.p-clip .panel-body { grid-template-columns: 45px 1fr; }
.p-clip .stack { padding-left: 3px; }
.p-view .panel-body { grid-template-columns: 50px; }
.p-view .tool-ic { height: 38px; margin-top: 2px; }

.p-annot .tool-ic {
    align-items: flex-start;
}

.big-a {
    margin-top: -3px;
    font-family: "Liberation Sans", sans-serif;
    font-size: 30px;
    line-height: normal;
    color: #eceef1;
    -webkit-text-stroke: .6px #eceef1;
}

/* Layer and property combos */
.combo {
    display: flex;
    align-items: center;
    height: 17px;
    padding: 0 4px;
    background: #4a5366;
}

.layer-col {
    padding: 1px 2px 0 1px;
}

.layer-combo {
    gap: 2px;
    margin-bottom: 2px;
    padding-left: 3px;
}

.layer-row {
    height: 20px;
    gap: 6px;
    padding-left: 1px;
}

.swatch {
    width: 11px;
    height: 11px;
    margin-left: 4px;
    background: #fff;
    border: 1px solid #222;
}

.swatch.big {
    width: 14px;
    height: 14px;
    margin-left: 6px;
}

.combo-text {
    margin-left: 3px;
}

.prop-combos {
    display: grid;
    grid-auto-rows: 17px;
    gap: 3px;
    padding: 1px 2px 0 0;
}

.lineprev {
    width: 52px;
    height: 1px;
    background: #d8dce3;
}

.prop-combos .combo-text {
    margin-left: 2px;
}

.prop-combos .bylayer {
    margin-left: 8px;
}

.wheel {
    width: 14px;
    height: 14px;
    border-radius: 50%;
    background: conic-gradient(#e85a4f, #e8c34a, #6cc070, #5aa8d8, #a06cc8, #e85a4f);
}

.p-groups .picked {
    width: 20px;
    justify-content: center;
    padding-left: 0;
    background: #4a6f92;
    border: 1px solid #7ab8e2;
}

/* File tabs */
.doctabs {
    display: flex;
    align-items: flex-end;
    height: 26px;
    padding-left: 17px;
    background: #1f2532;
    border-bottom: 3px solid #2c5e92;
}

.doctab {
    display: flex;
    justify-content: space-between;
    align-items: center;
    width: 102px;
    height: 19px;
    margin-right: 1px;
    padding: 0 7px 0 8px;
    background: #2d3443;
    border-radius: 6px 6px 0 0;
}

.doctab.current {
    width: 108px;
    background: #3b4354;
    color: #e8eaee;
    margin-left: 1px;
    padding-right: 11px;
}

.tab-x {
    font-size: 15px;
    line-height: 15px;
}

.tab-plus {
    margin-left: 8px;
    font-size: 13px;
    line-height: 19px;
}

/* Drawing area */
.canvas {
    position: relative;
    flex: 1;
    background: #000;
    overflow: hidden;
}

.drawing {
    position: absolute;
    left: 0;
    top: 0;
}

.dim-text {
    font-family: "Liberation Sans", sans-serif;
    font-size: 29px;
    fill: #0000ff;
    stroke: #0000ff;
    stroke-width: .5;
    text-anchor: middle;
}

.dim-line {
    fill: none;
    stroke: #e01414;
    stroke-width: 2;
}

.obj-line {
    fill: none;
    stroke: #0a0ac8;
    stroke-width: 2.2;
}

.grip {
    fill: #eee;
}

.caption {
    position: absolute;
    left: 238px;
    top: 54px;
    width: 797px;
    height: 146px;
    padding: 11px 0 0 7px;
    border-radius: 8px;
    background: rgba(32, 32, 32, .62);
    font-family: "Liberation Sans", sans-serif;
    font-weight: bold;
    font-size: 51px;
    letter-spacing: 0;
    line-height: 61px;
    text-align: center;
    color: #ffff33;
}

.cmdline {
    position: absolute;
    left: 305px;
    top: 534px;
    display: flex;
    align-items: center;
    gap: 3px;
    width: 717px;
    height: 20px;
    padding: 4px 4px 0 3px;
    background: #bcbcbc;
    border-bottom: 4px solid #b8dcf2;
}

.cmd-text {
    font-family: "Liberation Mono", monospace;
    font-style: italic;
    font-size: 10px;
    letter-spacing: 0;
    color: #666;
}

/* Status bar */
.statusbar {
    display: flex;
    height: 23px;
    padding-top: 1px;
    background: linear-gradient(to right, #2a6ac0 258px, #1f3f66 258px) top / 100% 1px no-repeat, #1f2532;
}

.layouts {
    display: grid;
    grid-template-columns: 55px 149px 143px auto;
    align-items: center;
    width: 782px;
    padding-left: 9px;
}

.ltab {
    color: #bcc1cb;
}

.ltab:nth-child(2) {
    padding-left: 3px;
}

.ltab.current {
    width: 46px;
    padding: 2px 0;
    background: #3b4354;
    color: #fff;
    font-weight: bold;
    text-align: center;
    border-radius: 0 0 4px 4px;
}

.ltab-plus {
    padding-left: 3px;
    font-size: 13px;
}

.status-tools {
    display: flex;
    gap: 1px;
    flex: 1;
}

.sgroup {
    display: flex;
    align-items: center;
    height: 22px;
    background: #3b4354;
}

.s-model { width: 40px; justify-content: center; font-size: 9.5px; letter-spacing: 0; }
.s-grid { width: 53px; gap: 6px; padding-left: 4px; }
.s-snap { width: 144px; gap: 4px; padding-left: 3px; }
.s-anno { width: 88px; gap: 4px; }
.s-gear { width: 55px; gap: 6px; padding-left: 3px; }
.s-iso { width: 24px; justify-content: center; }
.s-clean { width: 46px; gap: 6px; justify-content: center; }
.s-end { flex: 1; gap: 6px; justify-content: center; margin-left: 4px; }

.sbtn {
    display: flex;
    align-items: center;
    justify-content: center;
    width: 18px;
    height: 22px;
}

.sbtn.on {
    background: #5b8dc2;
}

.sbtn.wide {
    width: 22px;
}

.scale {
    margin-left: 4px;
    font-size: 9.5px;
}
```
